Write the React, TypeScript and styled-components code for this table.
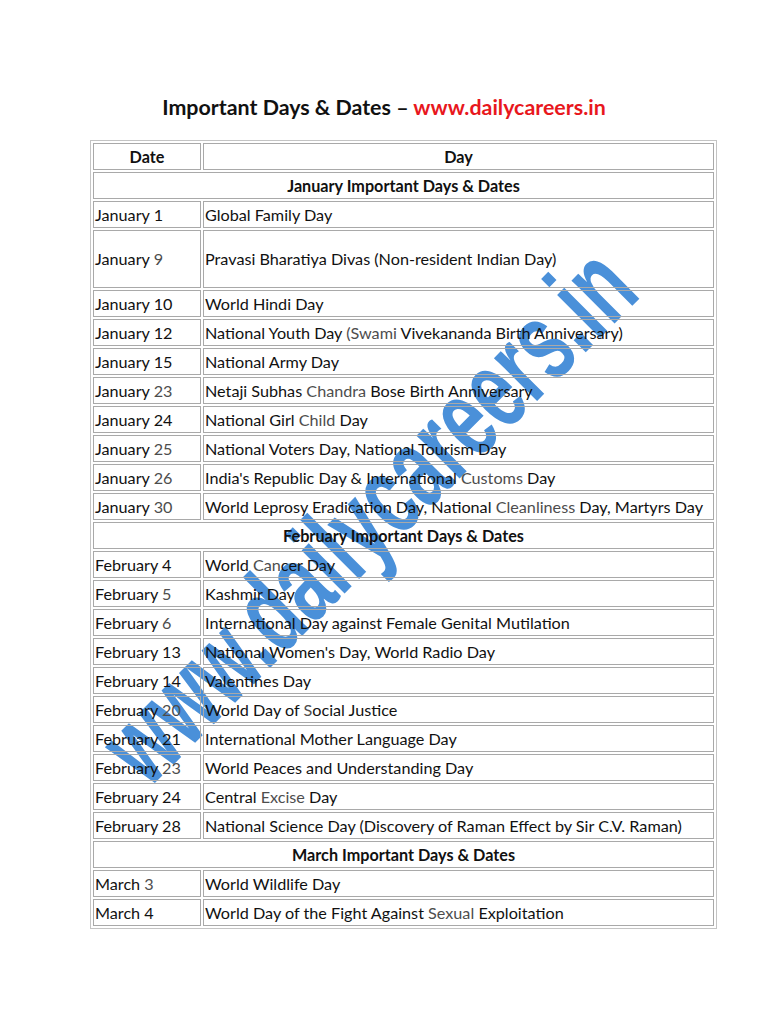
import React from 'react';
import styled, { createGlobalStyle } from 'styled-components';

const GlobalStyle = createGlobalStyle`
  html, body {
    margin: 0;
    padding: 0;
    background: #ffffff;
  }
  body {
    font-family: Lato, "Open Sans", sans-serif;
    color: #111111;
  }
`;

const Page = styled.div`
  position: relative;
  width: 768px;
  min-height: 1024px;
  padding-top: 94px;
  box-sizing: border-box;
  overflow: hidden;
`;

const Title = styled.h1`
  margin: 0 0 20px 0;
  text-align: center;
  font-family: Lato, sans-serif;
  font-size: 21.4px;
  font-weight: 700;
  line-height: 26px;
  color: #111111;
`;

const Red = styled.span`
  color: #e8171d;
`;

const TableWrap = styled.div`
  position: relative;
  z-index: 1;
  margin-left: 90px;
  width: 627px;
`;

const Table = styled.table`
  width: 627px;
  border-collapse: separate;
  border-spacing: 2px;
  border: 1px solid #c4c4c4;
  table-layout: fixed;
  background: transparent;
`;

const Cell = styled.td<{ $bold?: boolean; $center?: boolean; $tall?: boolean }>`
  box-sizing: border-box;
  height: ${p => (p.$tall ? '58px' : '27px')};
  padding: 0 1px;
  border: 1px solid #a9a9a9;
  font-family: Lato, sans-serif;
  font-size: 16.2px;
  line-height: 18px;
  font-weight: ${p => (p.$bold ? 700 : 400)};
  text-align: ${p => (p.$center ? 'center' : 'left')};
  vertical-align: middle;
  white-space: nowrap;
  color: #111111;
`;

const Soft = styled.span`
  color: #4d4d4d;
`;

/* diagonal page watermark sitting behind the table */
const Watermark = styled.div`
  position: absolute;
  left: 148px;
  top: 705px;
  z-index: 0;
  transform-origin: 0 85px;
  transform: rotate(-45deg) scale(0.73, 1.15);
  font-family: "Liberation Sans", Arial, sans-serif;
  font-size: 100px;
  font-weight: 700;
  line-height: 1;
  white-space: nowrap;
  color: #4a90d9;
  pointer-events: none;
`;

type Row =
  | { kind: 'month'; label: string }
  | { kind: 'day'; date: React.ReactNode; day: React.ReactNode; tall?: boolean };

const soft = (t: string) => <Soft>{t}</Soft>;

const rows: Row[] = [
  { kind: 'month', label: 'January Important Days & Dates' },
  { kind: 'day', date: 'January 1', day: 'Global Family Day' },
  { kind: 'day', date: <>January {soft('9')}</>, day: 'Pravasi Bharatiya Divas (Non-resident Indian Day)', tall: true },
  { kind: 'day', date: 'January 10', day: 'World Hindi Day' },
  { kind: 'day', date: 'January 12', day: <>National Youth Day {soft('(Swami')} Vivekananda Birth Anniversary)</> },
  { kind: 'day', date: 'January 15', day: 'National Army Day' },
  { kind: 'day', date: <>January {soft('23')}</>, day: <>Netaji Subhas {soft('Chandra')} Bose Birth Anniversary</> },
  { kind: 'day', date: 'January 24', day: <>National Girl {soft('Child')} Day</> },
  { kind: 'day', date: <>January {soft('25')}</>, day: 'National Voters Day, National Tourism Day' },
  { kind: 'day', date: <>January {soft('26')}</>, day: <>India's Republic Day &amp; International {soft('Customs')} Day</> },
  { kind: 'day', date: <>January {soft('30')}</>, day: <>World Leprosy Eradication Day, National {soft('Cleanliness')} Day, Martyrs Day</> },
  { kind: 'month', label: 'February Important Days & Dates' },
  { kind: 'day', date: 'February 4', day: <>World {soft('Can')}cer Day</> },
  { kind: 'day', date: <>February {soft('5')}</>, day: 'Kashmir Day' },
  { kind: 'day', date: <>February {soft('6')}</>, day: 'International Day against Female Genital Mutilation' },
  { kind: 'day', date: 'February 13', day: "National Women's Day, World Radio Day" },
  { kind: 'day', date: 'February 14', day: 'Valentines Day' },
  { kind: 'day', date: <>February {soft('20')}</>, day: <>World Day of {soft('S')}ocial Justice</> },
  { kind: 'day', date: 'February 21', day: 'International Mother Language Day' },
  { kind: 'day', date: <>February {soft('23')}</>, day: 'World Peaces and Understanding Day' },
  { kind: 'day', date: 'February 24', day: <>Central {soft('Excise')} Day</> },
  { kind: 'day', date: 'February 28', day: 'National Science Day (Discovery of Raman Effect by Sir C.V. Raman)' },
  { kind: 'month', label: 'March Important Days & Dates' },
  { kind: 'day', date: <>March {soft('3')}</>, day: 'World Wildlife Day' },
  { kind: 'day', date: 'March 4', day: <>World Day of the Fight Against {soft('Sexual')} Exploitation</> },
];

const App: React.FC = () => {
  return (
    <Page>
      <GlobalStyle />
      <Title>
        Important Days &amp; Dates – <Red>www.dailycareers.in</Red>
      </Title>

      <Watermark aria-hidden="true">www.dailycareers.in</Watermark>

      <TableWrap>
        <Table>
          <colgroup>
            <col style={{ width: '108px' }} />
            <col />
          </colgroup>
          <tbody>
            <tr>
              <Cell $bold $center>Date</Cell>
              <Cell $bold $center>Day</Cell>
            </tr>
            {rows.map((r, i) =>
              r.kind === 'month' ? (
                <tr key={i}>
                  <Cell colSpan={2} $bold $center>{r.label}</Cell>
                </tr>
              ) : (
                <tr key={i}>
                  <Cell $tall={r.tall}>{r.date}</Cell>
                  <Cell $tall={r.tall}>{r.day}</Cell>
                </tr>
              )
            )}
          </tbody>
        </Table>
      </TableWrap>
    </Page>
  );
};

export default App;
